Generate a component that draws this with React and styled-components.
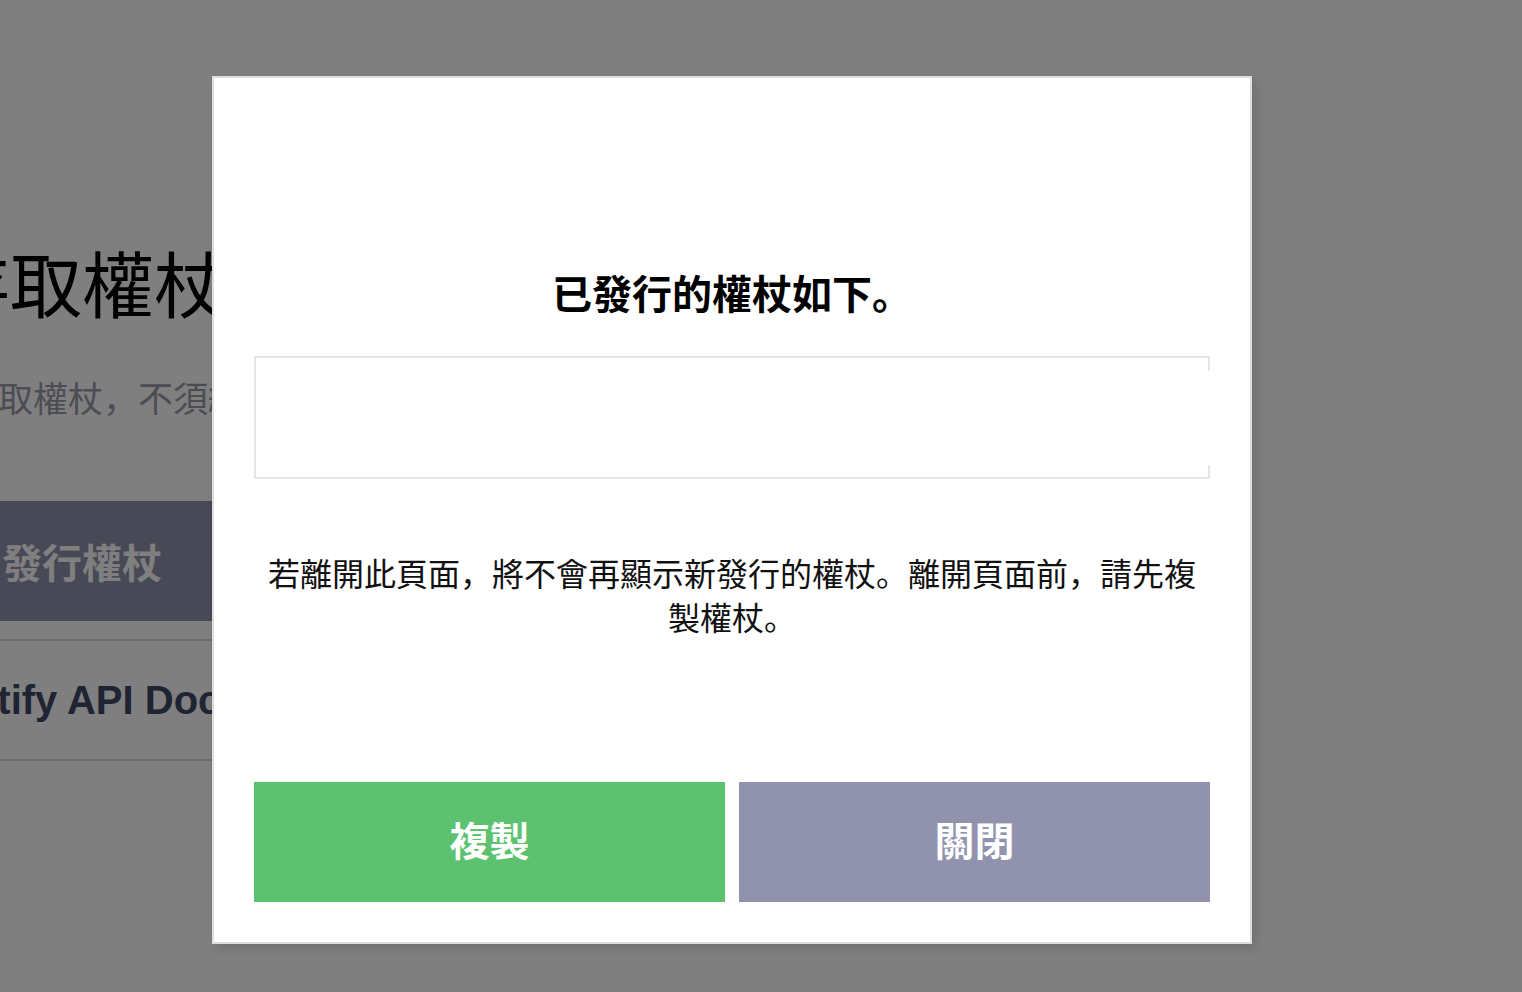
import React from "react";
import styled, { createGlobalStyle } from "styled-components";

const Global = createGlobalStyle`
  html, body { margin: 0; padding: 0; }
  body {
    width: 1522px;
    height: 992px;
    overflow: hidden;
    background: #ffffff;
    font-family: "Noto Sans CJK JP", "Noto Sans CJK TC", "Liberation Sans", sans-serif;
  }
`;

const Page = styled.div`
  position: relative;
  width: 1522px;
  height: 992px;
  overflow: hidden;
  background: #ffffff;
`;

const Content = styled.main`
  display: flex;
  flex-direction: column;
  padding-top: 231px;
  width: 900px;
`;

const Heading = styled.h1`
  margin: 0 0 0 -62px;
  font-size: 72px;
  font-weight: 400;
  line-height: 100px;
  color: #000;
  white-space: nowrap;
`;

const Lead = styled.p`
  margin: 41px 0 0 -107px;
  font-size: 35px;
  line-height: 50px;
  color: #999aa6;
  white-space: nowrap;
`;

const IssueButton = styled.button`
  margin: 79px 0 0 -40px;
  width: 600px;
  height: 120px;
  border: none;
  background: #9192ad;
  color: #ffffff;
  font-family: inherit;
  font-size: 40px;
  font-weight: 700;
  text-align: left;
  padding-left: 42px;
`;

const DocRow = styled.div`
  margin-top: 18px;
  border-top: 2px solid #dddddd;
  border-bottom: 2px solid #dddddd;
  height: 118px;
  display: flex;
  align-items: center;
  margin-left: -60px;
`;

const DocTitle = styled.span`
  font-family: "Liberation Sans", "Noto Sans", sans-serif;
  font-weight: 700;
  font-size: 40px;
  color: #3f4866;
  white-space: nowrap;
  padding-left: 4px;
`;

const Overlay = styled.div`
  position: absolute;
  inset: 0;
  background: rgba(0, 0, 0, 0.5);
`;

const Modal = styled.div`
  position: absolute;
  left: 212px;
  top: 76px;
  width: 1040px;
  height: 868px;
  box-sizing: border-box;
  background: #ffffff;
  border: 2px solid #dedede;
  box-shadow: 4px 4px 10px rgba(0, 0, 0, 0.12);
  padding: 0 40px 40px;
  display: flex;
  flex-direction: column;
`;

const ModalTitle = styled.h2`
  margin: 188px 0 0;
  text-align: center;
  font-size: 40px;
  font-weight: 700;
  line-height: 52px;
  color: #000;
`;

const TokenField = styled.div`
  position: relative;
  margin-top: 38px;
  height: 123px;
  box-sizing: border-box;
  border: 2px solid #e6e6e6;
  &::after {
    content: "";
    position: absolute;
    right: -2px;
    top: 13px;
    bottom: 12px;
    width: 2px;
    background: #ffffff;
  }
`;

const Notice = styled.p`
  margin: 71px 0 0;
  text-align: center;
  font-size: 32px;
  line-height: 44px;
  color: #111;
`;

const Actions = styled.div`
  margin-top: auto;
  display: grid;
  grid-template-columns: 1fr 1fr;
  gap: 14px;
`;

const ActionButton = styled.button`
  height: 120px;
  border: none;
  padding: 0 0 6px;
  background: ${(p) => (p.$variant === "primary" ? "#5cc270" : "#9192ad")};
  color: #ffffff;
  font-family: inherit;
  font-size: 40px;
  font-weight: 700;
  cursor: pointer;
`;

export default function App() {
  return (
    <>
      <Global />
      <Page>
        <Content>
          <Heading>存取權杖</Heading>
          <Lead>個人存取權杖，不須經過使用者認證</Lead>
          <IssueButton>發行權杖</IssueButton>
          <DocRow>
            <DocTitle>Notify API Document</DocTitle>
          </DocRow>
        </Content>
        <Overlay />
        <Modal>
          <ModalTitle>已發行的權杖如下。</ModalTitle>
          <TokenField />
          <Notice>
            若離開此頁面，將不會再顯示新發行的權杖。離開頁面前，請先複製權杖。
          </Notice>
          <Actions>
            <ActionButton $variant="primary">複製</ActionButton>
            <ActionButton>關閉</ActionButton>
          </Actions>
        </Modal>
      </Page>
    </>
  );
}
